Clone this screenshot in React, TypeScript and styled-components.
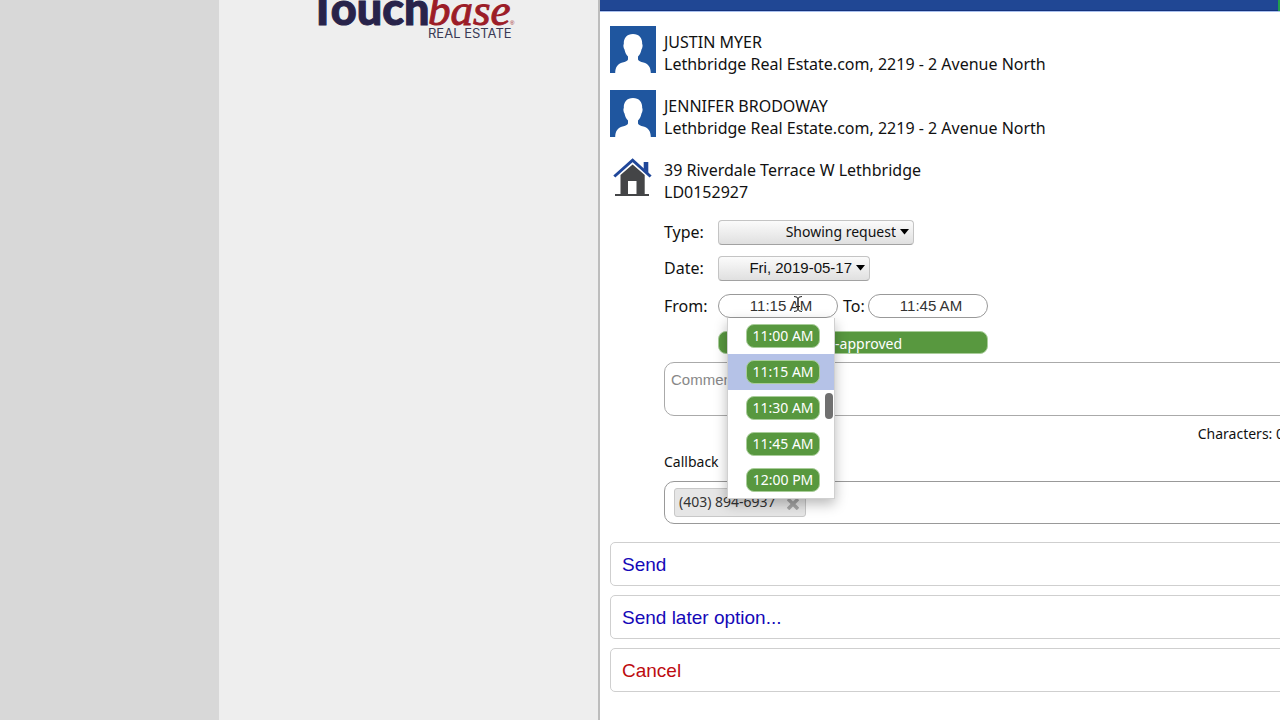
import React from "react";
import styled, { createGlobalStyle } from "styled-components";

const humanist = `"Noto Sans", "Open Sans", sans-serif`;
const grotesque = `"Liberation Sans", Arial, sans-serif`;

const GlobalStyle = createGlobalStyle`
  * { box-sizing: border-box; }
  body { margin: 0; background: #d8d8d8; color: #111; font: 16px/22px ${humanist}; }
  button, input, select, textarea { margin: 0; font: inherit; color: inherit; }
`;

const Page = styled.div`
  display: flex;
  min-height: 100vh;
  padding-left: 219px;
  overflow: hidden;
`;

const Sidebar = styled.aside`
  flex: 0 0 379px;
  background: #eeeeee;
  padding-left: 90px;
`;

const Logo = styled.svg`
  display: block;
`;

const Main = styled.main`
  flex: 1;
  min-width: 0;
  overflow: hidden;
  background: #fff;
  border-left: 2px solid #bdbdbd;
`;

const Header = styled.header`
  display: flex;
  justify-content: flex-end;
  height: 12px;
  background: #204794;
  border-bottom: 1px solid #a9c0ee;
  box-shadow: inset 0 -1px #14327c;
`;

const Status = styled.span`
  width: 2px;
  background: #22a04a;
`;

const Content = styled.div`
  margin-right: -20px;
  padding: 14px 0 27px 10px;
`;

const People = styled.ul`
  display: grid;
  gap: 16px;
  margin: 0;
  padding: 0;
  list-style: none;
`;

const Person = styled.li`
  display: flex;
  gap: 8px;
  height: 48px;
`;

const PersonText = styled.div`
  padding-top: 5px;
  white-space: nowrap;
`;

const Form = styled.form`
  display: block;
`;

const Fields = styled.div`
  margin: 18px 0 0 54px;
`;

const Row = styled.div<{ $gap: number }>`
  display: flex;
  align-items: center;
  height: 24px;
  margin-bottom: ${(p) => p.$gap}px;
`;

const Label = styled.label`
  flex: 0 0 54px;
`;

const ToLabel = styled.label`
  flex: 0 0 30px;
  padding-left: 5px;
`;

const SelectWrap = styled.span<{ $width: number }>`
  position: relative;
  width: ${(p) => p.$width}px;
  height: 25px;
`;

const Select = styled.select<{ $font: string; $size: number }>`
  appearance: none;
  width: 100%;
  height: 100%;
  padding: 0 17px 0 0;
  border: 1px solid #c4c4c4;
  border-bottom-color: #a2a2a2;
  border-radius: 4px;
  background: linear-gradient(#fbfbfb, #e0e0e0);
  font-family: ${(p) => p.$font};
  font-size: ${(p) => p.$size}px;
  text-align: right;
  text-align-last: right;
`;

const Caret = styled.svg`
  position: absolute;
  right: 5px;
  top: 9px;
  pointer-events: none;
`;

const TimeWrap = styled.span`
  position: relative;
  width: 120px;
  height: 24px;
`;

const TimeInput = styled.input`
  display: block;
  width: 100%;
  height: 100%;
  padding: 0 0 1px 6px;
  border: 1px solid #999;
  border-radius: 12px;
  background: #fff;
  color: #333;
  font-family: ${grotesque};
  font-size: 15px;
  text-align: center;
`;

const Pointer = styled.svg`
  position: absolute;
  left: 75px;
  top: 1px;
  z-index: 2;
`;

const Menu = styled.ul`
  position: absolute;
  left: 9px;
  top: 24px;
  z-index: 1;
  width: 108px;
  margin: 0;
  padding: 0;
  list-style: none;
  background: #fff;
  border: 1px solid #d0d0d0;
  border-top: 0;
  box-shadow: 0 5px 12px rgba(0, 0, 0, 0.28);
`;

const MenuItem = styled.li<{ $active: boolean }>`
  display: flex;
  align-items: center;
  height: 36px;
  padding-left: 18px;
  background: ${(p) => (p.$active ? "#b5c2e7" : "transparent")};
`;

const Slot = styled.button`
  width: 74px;
  height: 24px;
  padding: 0;
  border: 1px solid #a9cd9a;
  border-radius: 8px;
  background: #58983f;
  color: #fff;
  font-size: 14px;
  line-height: 20px;
  white-space: nowrap;
`;

const Thumb = styled.li`
  position: absolute;
  right: 1px;
  top: 75px;
  width: 8px;
  height: 26px;
  border-radius: 4px;
  background: #707070;
`;

const Approval = styled.div`
  width: 270px;
  height: 23px;
  margin-left: 54px;
  border: 1px solid #a9cd9a;
  border-radius: 8px;
  background: #58983f;
  color: #fff;
  font-size: 14px;
  line-height: 23px;
  text-align: center;
`;

const Comments = styled.textarea`
  display: block;
  width: 100%;
  height: 54px;
  margin-top: 8px;
  padding: 6px;
  border: 1px solid #aaa;
  border-radius: 10px;
  resize: none;
  font-family: ${grotesque};
  font-size: 15px;
  line-height: 22px;

  &::placeholder { color: #888; }
`;

const Counter = styled.p`
  margin: 7px 16px 0 0;
  text-align: right;
  font-size: 14px;
`;

const CallbackLabel = styled.label`
  display: block;
  margin: 6px 0 8px;
  font-size: 14px;
`;

const Callback = styled.div`
  height: 43px;
  padding: 6px 9px;
  border: 1px solid #999;
  border-radius: 10px;
`;

const Tag = styled.span`
  display: flex;
  align-items: center;
  justify-content: space-between;
  width: 132px;
  height: 29px;
  padding: 0 6px 2px 4px;
  border: 1px solid #c8c8c8;
  border-radius: 3px;
  background: #e6e6e6;
  color: #333;
  font-size: 14px;
`;

const Remove = styled.button`
  display: flex;
  padding: 5px 0 0;
  border: 0;
  background: none;
`;

const Actions = styled.div`
  display: grid;
  gap: 9px;
  margin-top: 18px;
`;

const Action = styled.button<{ $color: string }>`
  height: 44px;
  padding: 2px 11px 0;
  border: 1px solid #cfcfcf;
  border-radius: 5px;
  background: #fff;
  color: ${(p) => p.$color};
  font-family: ${grotesque};
  font-size: 19px;
  text-align: left;
`;

const Avatar = () => (
  <svg width="46" height="47" viewBox="0 0 46 47" aria-hidden="true">
    <path fill="#1f569f" d="M0 0h46v47H0z" />
    <path
      fill="#fff"
      d="M23 8c6 0 9.500 4 9.200 10 .8 1 .3 4-.7 5.500-.6 3.500-2 5.500-3.500 7v3c.5 1.500 2.500 2.300 5.500 3 4.500 1.200 7.300 4.500 7.300 10.500H5.200c0-6 2.800-9.300 7.300-10.500 3-.7 5-1.500 5.500-3v-3c-1.500-1.500-2.900-3.500-3.500-7-1-1.500-1.500-4.500-.7-5.500C13.500 12 17 8 23 8z"
    />
  </svg>
);

const House = () => (
  <svg width="46" height="47" viewBox="0 0 46 47" aria-hidden="true">
    <path fill="#444547" d="M22.600 10.500 34.700 21v19H39v2H5v-2h5.500V21z" />
    <path fill="#fff" d="M18 27h8.500v13H18z" />
    <path fill="#20479a" d="M33.700 8h4.600v11l-4.600-4z" />
    <path fill="none" stroke="#20479a" strokeWidth="3" d="M4.300 22.500 22.600 6.200l18 16.300" />
  </svg>
);

const Down = () => (
  <Caret width="9" height="6" viewBox="0 0 9 6" aria-hidden="true">
    <path d="M0 0h9L4.500 5.500z" />
  </Caret>
);

const people = [
  { icon: <Avatar />, title: "JUSTIN MYER", detail: "Lethbridge Real Estate.com, 2219 - 2 Avenue North" },
  { icon: <Avatar />, title: "JENNIFER BRODOWAY", detail: "Lethbridge Real Estate.com, 2219 - 2 Avenue North" },
  { icon: <House />, title: "39 Riverdale Terrace W Lethbridge", detail: "LD0152927" },
];

const slots = ["11:00 AM", "11:15 AM", "11:30 AM", "11:45 AM", "12:00 PM"];

export default function App() {
  return (
    <>
      <GlobalStyle />
      <Page>
        <Sidebar>
          <Logo width="210" height="44" role="img" aria-label="Touchbase Real Estate">
            <text x="0" y="25" fill="#28234a" stroke="#28234a" strokeWidth="1" fontFamily="Lato, sans-serif" fontWeight="900" fontSize="45">Touch</text>
            <text x="119" y="25" fill="#9c1c27" stroke="#9c1c27" strokeWidth="1" fontFamily="Liberation Serif, serif" fontStyle="italic" fontSize="45">base</text>
            <text x="201" y="25" fill="#9c1c27" fontFamily="Liberation Sans, sans-serif" fontSize="6">®</text>
            <text x="119" y="38" fill="#3a3a55" fontFamily="Inter, sans-serif" fontSize="13">REAL ESTATE</text>
          </Logo>
        </Sidebar>
        <Main>
          <Header><Status /></Header>
          <Content>
            <People>
              {people.map((p) => (
                <Person key={p.title}>
                  {p.icon}
                  <PersonText>
                    <div>{p.title}</div>
                    <div>{p.detail}</div>
                  </PersonText>
                </Person>
              ))}
            </People>
            <Form onSubmit={(e) => e.preventDefault()}>
              <Fields>
                <Row $gap={12}>
                  <Label htmlFor="type">Type:</Label>
                  <SelectWrap $width={196}>
                    <Select id="type" $font={humanist} $size={14}>
                      <option>Showing request</option>
                    </Select>
                    <Down />
                  </SelectWrap>
                </Row>
                <Row $gap={14}>
                  <Label htmlFor="date">Date:</Label>
                  <SelectWrap $width={152}>
                    <Select id="date" $font={grotesque} $size={15}>
                      <option>Fri, 2019-05-17</option>
                    </Select>
                    <Down />
                  </SelectWrap>
                </Row>
                <Row $gap={13}>
                  <Label htmlFor="from">From:</Label>
                  <TimeWrap>
                    <TimeInput id="from" defaultValue="11:15 AM" />
                    <Menu>
                      {slots.map((s) => (
                        <MenuItem key={s} $active={s === "11:15 AM"}>
                          <Slot type="button">{s}</Slot>
                        </MenuItem>
                      ))}
                      <Thumb aria-hidden="true" />
                    </Menu>
                    <Pointer width="10" height="18" viewBox="0 0 10 18" aria-hidden="true">
                      <path fill="none" stroke="#fff" strokeWidth="3" d="M1 1.500q4 0 4 2.500v10q0 2.500-4 2.500M9 1.500q-4 0-4 2.500v10q0 2.500 4 2.500" />
                      <path fill="none" stroke="#222" d="M1 1.500q4 0 4 2.500v10q0 2.500-4 2.500M9 1.500q-4 0-4 2.500v10q0 2.500 4 2.500M3 11.500h4" />
                    </Pointer>
                  </TimeWrap>
                  <ToLabel htmlFor="to">To:</ToLabel>
                  <TimeWrap>
                    <TimeInput id="to" defaultValue="11:45 AM" />
                  </TimeWrap>
                </Row>
                <Approval>Auto-approved</Approval>
                <Comments aria-label="Comments" placeholder="Comments" />
                <Counter>Characters: 0</Counter>
                <CallbackLabel htmlFor="remove-callback">Callback</CallbackLabel>
                <Callback>
                  <Tag>
                    (403) 894-6937
                    <Remove id="remove-callback" type="button" aria-label="Remove (403) 894-6937">
                      <svg width="12" height="12" viewBox="0 0 12 12" aria-hidden="true">
                        <path stroke="#a5a5a5" strokeWidth="3.500" d="m1 1 10 10M11 1 1 11" />
                      </svg>
                    </Remove>
                  </Tag>
                </Callback>
              </Fields>
              <Actions>
                <Action type="submit" $color="#1508b8">Send</Action>
                <Action type="button" $color="#1508b8">Send later option...</Action>
                <Action type="button" $color="#bd0b10">Cancel</Action>
              </Actions>
            </Form>
          </Content>
        </Main>
      </Page>
    </>
  );
}
